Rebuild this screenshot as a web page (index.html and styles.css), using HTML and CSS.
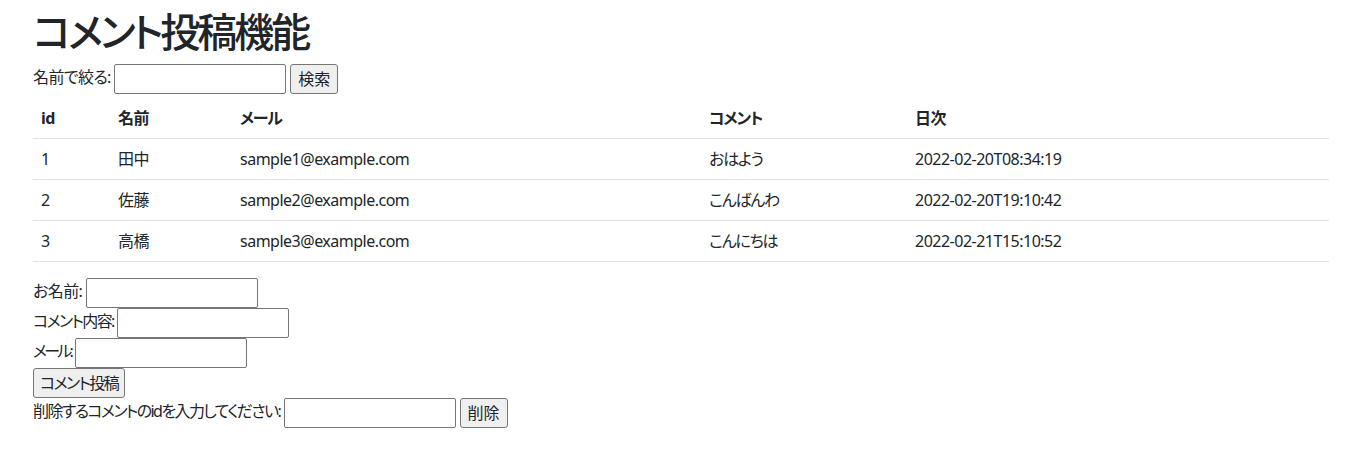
FILE: index.html
```html
<!DOCTYPE html>
<html lang="ja">
<head>
<meta charset="utf-8">
<title>コメント投稿機能</title>
<link rel="stylesheet" href="styles.css">
</head>
<body>
<div class="page">
  <h1 class="title">コメント投稿機能</h1>
  <form class="line"><span class="lbl-s">名前で絞る:</span> <input type="text" class="field"> <button type="button" class="btn btn-s">検索</button></form>
  <table class="table">
    <colgroup>
      <col class="c-id"><col class="c-name"><col class="c-mail"><col class="c-comment"><col class="c-date">
    </colgroup>
    <thead>
      <tr><th>id</th><th>名前</th><th class="kana">メール</th><th class="kana">コメント</th><th>日次</th></tr>
    </thead>
    <tbody>
      <tr><td>1</td><td>田中</td><td>sample1@example.com</td><td class="kana">おはよう</td><td>2022-02-20T08:34:19</td></tr>
      <tr><td>2</td><td>佐藤</td><td>sample2@example.com</td><td class="kana">こんばんわ</td><td>2022-02-20T19:10:42</td></tr>
      <tr><td>3</td><td>高橋</td><td>sample3@example.com</td><td class="kana">こんにちは</td><td>2022-02-21T15:10:52</td></tr>
    </tbody>
  </table>
  <form class="post">
    <div class="line"><span class="lbl-s">お名前:</span> <input type="text" class="field"></div>
    <div class="line"><span class="lbl-m">コメント内容:</span> <input type="text" class="field"></div>
    <div class="line"><span class="lbl-l">メール:</span> <input type="text" class="field"></div>
    <div class="line"><button type="button" class="btn lbl-m">コメント投稿</button></div>
    <div class="line"><span class="lbl-m">削除するコメントのidを入力してください:</span> <input type="text" class="field"> <button type="button" class="btn btn-s">削除</button></div>
  </form>
</div>
</body>
</html>
```

FILE: styles.css
```css
*, *::before, *::after { box-sizing: border-box; }
html, body { margin: 0; padding: 0; background: #fff; }
body {
  font-family: "Noto Sans", "Noto Sans CJK JP", sans-serif;
  font-size: 16px;
  line-height: 1.5;
  color: #212529;
  font-feature-settings: "palt";
  letter-spacing: -0.5px;
}
.page {
  padding: 8px 29px 0 33px;
}
.title {
  margin: 0 0 8px;
  font-size: 40px;
  line-height: 1.2;
  font-weight: 500;
  letter-spacing: -3px;
}
.line { margin: 0; }
.lbl-s { letter-spacing: -0.6px; }
.lbl-m { letter-spacing: -1.6px; }
.lbl-l { letter-spacing: -2.7px; }
.kana { letter-spacing: -1.2px; }
.field {
  width: 172px;
  height: 30px;
  font: inherit;
  line-height: 24px;
  padding: 1px 2px;
  border: 1px solid #767676;
  border-radius: 2px;
  vertical-align: middle;
  background: #fff;
  color: #212529;
}
.btn {
  height: 30px;
  font: inherit;
  line-height: 24px;
  padding: 1px 6px;
  border: 1px solid #767676;
  border-radius: 3px;
  background: #efefef;
  color: #212529;
  vertical-align: middle;
}
.btn-s { letter-spacing: 0; padding: 1px 7px 1px 7px; }
.table {
  width: 100%;
  border-collapse: collapse;
  margin: 4px 0 16px;
}
.c-id { width: 77px; }
.c-name { width: 122px; }
.c-mail { width: 469px; }
.c-comment { width: 206px; }
.table th, .table td {
  padding: 8px;
  text-align: left;
  border-bottom: 1px solid #dee2e6;
  vertical-align: top;
}
.table th { font-weight: 700; }
```
